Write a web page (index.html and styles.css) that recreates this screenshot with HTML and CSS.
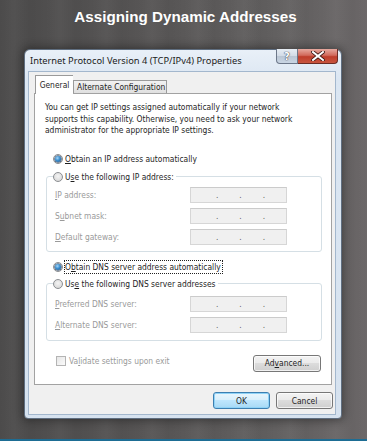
FILE: index.html
```html
<!DOCTYPE html>
<html>
<head>
<meta charset="utf-8">
<link rel="stylesheet" href="styles.css">
</head>
<body>
<div class="stage">
  <h1 class="slide-title">Assigning Dynamic Addresses</h1>
  <div class="window">
    <div class="titlebar">
      <span class="wtitle">Internet Protocol Version 4 (TCP/IPv4) Properties</span>
      <div class="caption-btns">
        <span class="cbtn help">?</span>
        <span class="cbtn close">
          <svg width="14" height="10" viewBox="0 0 14 10"><path d="M2 1 L12 9 M12 1 L2 9" stroke="#3b1512" stroke-width="3.6" stroke-linecap="square"/><path d="M2 1 L12 9 M12 1 L2 9" stroke="#ffffff" stroke-width="2" stroke-linecap="square"/></svg>
        </span>
      </div>
    </div>
    <div class="client">
      <div class="tabs">
        <span class="tab active">General</span>
        <span class="tab">Alternate Configuration</span>
      </div>
      <div class="panel">
        <p class="intro">You can get IP settings assigned automatically if your network<br>supports this capability. Otherwise, you need to ask your network<br>administrator for the appropriate IP settings.</p>

        <div class="radio-row r-auto"><span class="radio checked"></span><span class="rlabel"><u>O</u>btain an IP address automatically</span></div>
        <fieldset class="group g-ip">
          <legend class="radio-row"><span class="radio"></span><span class="rlabel">U<u>s</u>e the following IP address:</span></legend>
          <div class="field first"><span class="lbl"><u>I</u>P address:</span><span class="ipbox"><i>.</i><i>.</i><i>.</i></span></div>
          <div class="field"><span class="lbl">S<u>u</u>bnet mask:</span><span class="ipbox"><i>.</i><i>.</i><i>.</i></span></div>
          <div class="field"><span class="lbl"><u>D</u>efault gateway:</span><span class="ipbox"><i>.</i><i>.</i><i>.</i></span></div>
        </fieldset>

        <div class="radio-row r-dns"><span class="radio checked"></span><span class="rlabel focus">O<u>b</u>tain DNS server address automatically</span></div>
        <fieldset class="group g-dns">
          <legend class="radio-row"><span class="radio"></span><span class="rlabel">Us<u>e</u> the following DNS server addresses</span></legend>
          <div class="field first"><span class="lbl"><u>P</u>referred DNS server:</span><span class="ipbox"><i>.</i><i>.</i><i>.</i></span></div>
          <div class="field"><span class="lbl"><u>A</u>lternate DNS server:</span><span class="ipbox"><i>.</i><i>.</i><i>.</i></span></div>
        </fieldset>

        <div class="bottom-row">
          <span class="check"></span><span class="lbl">Va<u>l</u>idate settings upon exit</span>
          <span class="btn adv">Ad<u>v</u>anced...</span>
        </div>
      </div>
      <div class="dlg-buttons">
        <span class="btn ok">OK</span>
        <span class="btn">Cancel</span>
      </div>
    </div>
  </div>
  <div class="bluebar"></div>
</div>
</body>
</html>
```

FILE: styles.css
```css
* { box-sizing: border-box; }
html, body { margin: 0; padding: 0; }
body {
  width: 367px;
  height: 441px;
  overflow: hidden;
  background: #555353;
}
.stage {
  width: 367px;
  height: 441px;
  display: flex;
  flex-direction: column;
  background:
    repeating-linear-gradient(90deg, rgba(255,255,255,0.00) 0px, rgba(255,255,255,0.03) 14px, rgba(0,0,0,0.03) 30px, rgba(255,255,255,0.00) 46px),
    linear-gradient(90deg, #4c4b4b 0%, #575555 40%, #626060 75%, #6c6869 100%);
}
.slide-title {
  margin: 8px 0 0 4px;
  height: 18px;
  line-height: 18px;
  font-family: "Liberation Sans", Arial, sans-serif;
  font-weight: bold;
  font-size: 15.2px;
  color: #ffffff;
  text-align: center;
}
.window {
  margin: 23px 0 0 24px;
  width: 318px;
  height: 370px;
  border: 1px solid #5f6e80;
  border-radius: 6px 6px 4px 4px;
  background: linear-gradient(180deg, #e9f0f8 0%, #dbe6f2 8%, #d6e2ef 100%);
  padding: 0 5px 3px 3px;
  display: flex;
  flex-direction: column;
  box-shadow: 0 0 8px 2px rgba(20,20,20,0.45);
}
.titlebar {
  height: 21px;
  display: flex;
  align-items: flex-start;
  padding-left: 2px;
}
.wtitle {
  margin-top: 5px;
  font-family: "Noto Sans", "Open Sans", sans-serif;
  font-size: 9.3px;
  line-height: 12px;
  color: #1b1b1b;
  white-space: nowrap;
}
.caption-btns {
  margin-left: auto;
  margin-top: -1px;
  margin-right: -2px;
  display: flex;
  height: 15px;
}
.cbtn {
  height: 15px;
  display: flex;
  align-items: center;
  justify-content: center;
  border: 1px solid #6c7789;
  border-top: none;
}
.help {
  width: 22px;
  border-radius: 0 0 0 4px;
  background: linear-gradient(180deg, #e7edf4 0%, #d2dbe6 50%, #bac6d4 51%, #c9d5e3 100%);
  font-family: "DejaVu Sans", sans-serif;
  font-weight: bold;
  font-size: 10px;
  color: #ffffff;
  text-shadow: 0 0 1px #334, 0 0 1px #334;
}
.close {
  width: 40px;
  border-left: none;
  border-color: #6b2c25;
  border-radius: 0 0 4px 0;
  background: linear-gradient(180deg, #e6a99f 0%, #d26a5c 45%, #bf3d2b 55%, #c8553f 100%);
}
.client {
  flex: 1;
  background: #f0f0f0;
  border: 1px solid #a3b7cd;
  padding: 3px 3px 0 5px;
  display: flex;
  flex-direction: column;
  font-family: "DejaVu Sans Condensed", "DejaVu Sans", sans-serif;
  font-size: 8.4px;
  color: #1e1e1e;
}
.tabs {
  height: 18px;
  display: flex;
  align-items: flex-end;
  padding-left: 1px;
  position: relative;
  z-index: 1;
}
.tab {
  height: 13px;
  line-height: 12px;
  padding: 0 3px;
  border: 1px solid #9a9a9a;
  border-bottom: none;
  background: linear-gradient(180deg, #f2f2f2, #e0e0e0);
  white-space: nowrap;
  text-align: center;
}
.tab.active {
  width: 38px;
  height: 19px;
  margin-bottom: -1px;
  background: #ffffff;
  line-height: 16px;
  padding-top: 1px;
  border-right: none;
}
.tab:not(.active) { width: 94px; }
.panel {
  height: 292px;
  background: #ffffff;
  border: 1px solid #a2a2a2;
  display: flex;
  flex-direction: column;
}
.intro {
  margin: 8px 0 0 10px;
  line-height: 11.6px;
  white-space: nowrap;
}
.radio-row {
  display: flex;
  align-items: center;
  height: 12px;
  white-space: nowrap;
}
.r-auto { margin: 16px 0 0 18px; }
.r-dns { margin: 9px 0 0 18px; }
.radio {
  width: 10px;
  height: 10px;
  border-radius: 50%;
  border: 1px solid #8b8e92;
  background: radial-gradient(circle at 50% 40%, #f4f4f4 0%, #dcdcdc 70%, #c9c9c9 100%);
  margin-right: 2px;
  flex: none;
  display: flex;
  align-items: center;
  justify-content: center;
}
.radio.checked::after {
  content: "";
  width: 6px;
  height: 6px;
  border-radius: 50%;
  background: radial-gradient(circle at 40% 35%, #a6d6f8 0%, #3b8fd0 45%, #1b4f86 100%);
  box-shadow: 0 0 0 0.5px #17385e;
}
.rlabel { line-height: 12px; }
.rlabel.focus {
  outline: 1px dotted #222;
  outline-offset: 0px;
  padding-right: 1px;
}
.group {
  margin: 0;
  padding: 0 0 6px 0;
  border: 1px solid #d5dfe5;
  border-radius: 3px;
  min-width: 0;
}
.g-ip { margin: 6px 9px 0 11px; }
.g-dns { margin: 5px 9px 0 11px; padding-bottom: 7px; }
.group legend {
  padding: 0 2px 0 0;
  margin-left: 6px;
  background: #ffffff;
}
.field {
  display: flex;
  align-items: center;
  height: 16px;
  margin-top: 5px;
  padding-left: 8px;
}
.g-ip .field.first { margin-top: 4px; }
.g-dns .field.first { margin-top: 6px; }
.lbl {
  color: #9a9a9a;
  width: 135px;
  white-space: nowrap;
}
.ipbox {
  width: 97px;
  height: 16px;
  background: #f0f0f0;
  border: 1px solid #d6d6d6;
  border-top-color: #cbcbcb;
  display: flex;
  justify-content: space-evenly;
  align-items: center;
  padding-left: 4px;
}
.ipbox i {
  font-style: normal;
  color: #5a5a5a;
  line-height: 10px;
}
.bottom-row {
  margin: 14px 10px 0 21px;
  height: 17px;
  display: flex;
  align-items: flex-start;
}
.check {
  width: 10px;
  height: 10px;
  margin-top: 1px;
  margin-right: 3px;
  border: 1px solid #b4b4b4;
  background: linear-gradient(135deg, #e6e6e6, #fbfbfb);
  flex: none;
}
.bottom-row .lbl { line-height: 12px; width: auto; }
.btn {
  width: 57px;
  height: 17px;
  border: 1px solid #777777;
  border-radius: 3px;
  background: linear-gradient(180deg, #f3f3f3 0%, #ebebeb 45%, #dcdcdc 50%, #cfcfcf 100%);
  display: flex;
  align-items: center;
  justify-content: center;
  white-space: nowrap;
  box-shadow: inset 0 0 0 1px rgba(255,255,255,0.7);
}
.btn.adv {
  width: 68px;
  margin-left: auto;
}
.dlg-buttons {
  margin-top: 7px;
  margin-right: -1px;
  display: flex;
  justify-content: flex-end;
  gap: 6px;
}
.btn.ok {
  border-color: #3c7fb1;
  background: linear-gradient(180deg, #eaf6fd 0%, #d9f0fc 45%, #bee6fd 50%, #a7d9f5 100%);
  box-shadow: inset 0 0 0 1px #8fd3f7;
}
.bluebar {
  margin-top: 20px;
  height: 2px;
  background: #1d6d94;
}
```
